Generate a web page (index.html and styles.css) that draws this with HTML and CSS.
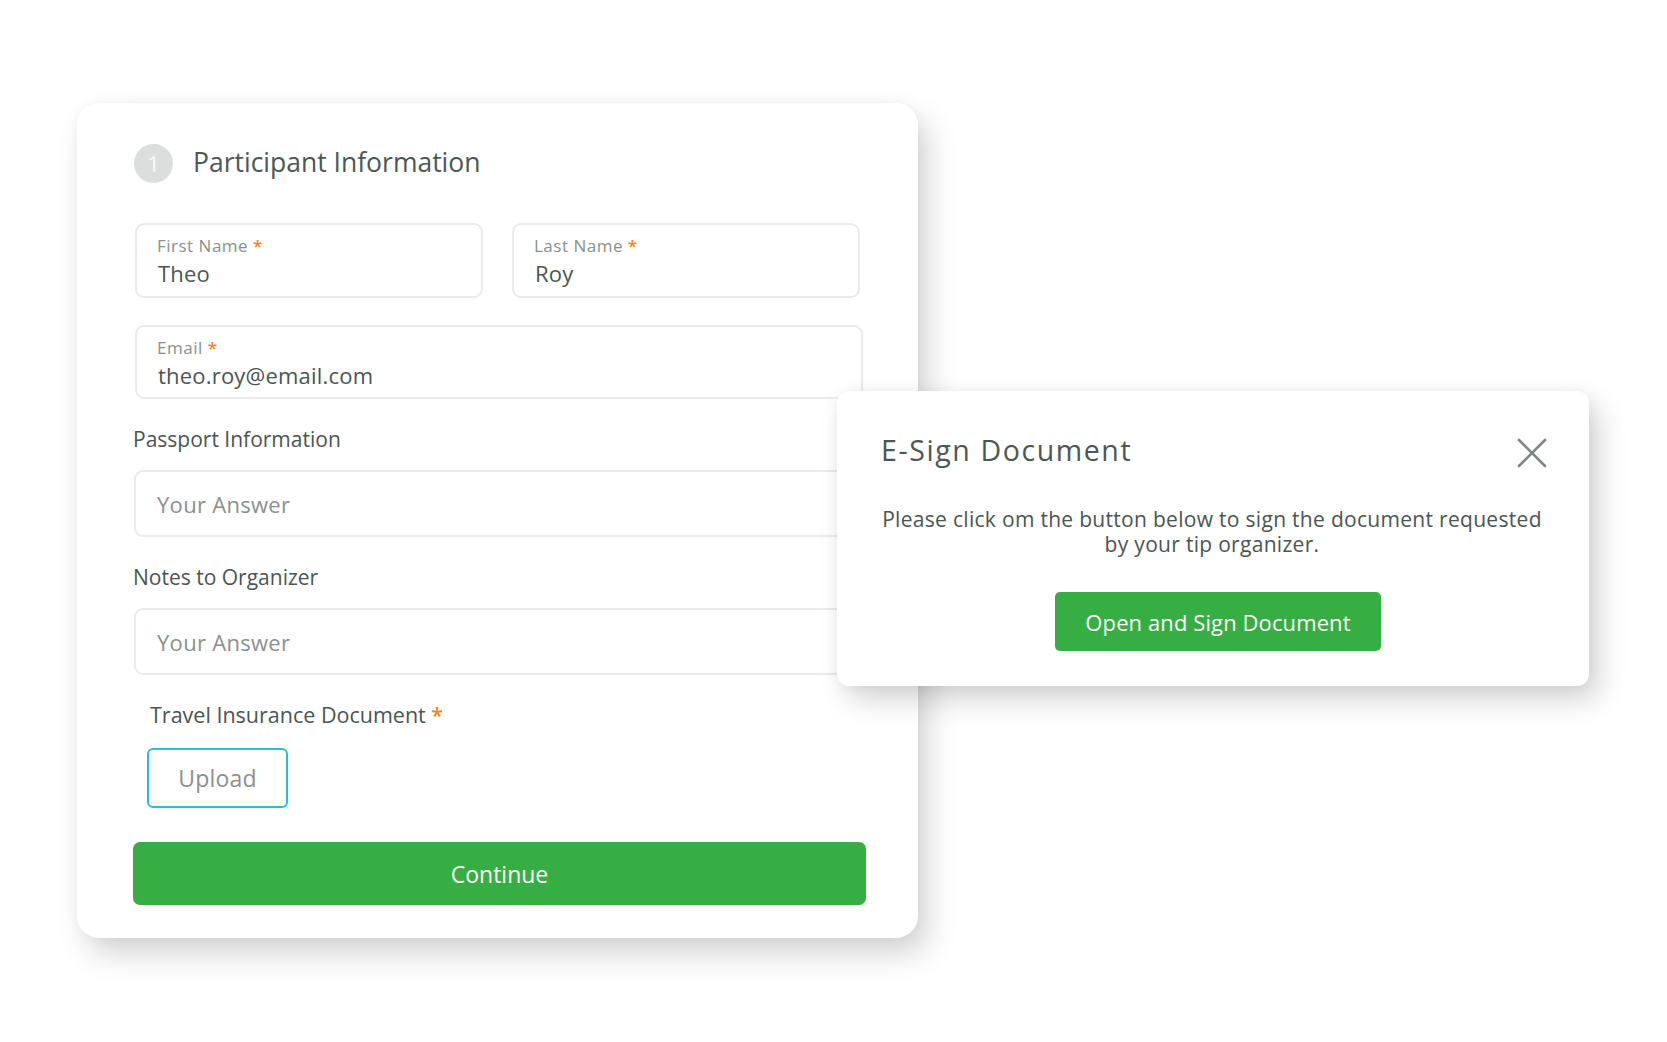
FILE: index.html
```html
<!DOCTYPE html>
<html lang="en">
<head>
<meta charset="utf-8">
<title>Participant Information</title>
<link rel="stylesheet" href="styles.css">
</head>
<body>
<div class="stage">
  <section class="card">
    <header class="card-head">
      <span class="step">1</span>
      <h1 class="card-title">Participant Information</h1>
    </header>

    <div class="name-row">
      <div class="field">
        <span class="field-label">First Name <span class="req">*</span></span>
        <span class="field-value">Theo</span>
      </div>
      <div class="field">
        <span class="field-label">Last Name <span class="req">*</span></span>
        <span class="field-value">Roy</span>
      </div>
    </div>

    <div class="field field-wide">
      <span class="field-label">Email <span class="req">*</span></span>
      <span class="field-value">theo.roy@email.com</span>
    </div>

    <div class="q-label">Passport Information</div>
    <div class="answer">Your Answer</div>

    <div class="q-label">Notes to Organizer</div>
    <div class="answer">Your Answer</div>

    <div class="q-label q-doc">Travel Insurance Document <span class="req">*</span></div>
    <button class="upload" type="button">Upload</button>

    <button class="continue" type="button">Continue</button>
  </section>

  <aside class="modal">
    <div class="modal-head">
      <h2 class="modal-title">E-Sign Document</h2>
      <svg class="close" width="30" height="30" viewBox="0 0 30 30" aria-hidden="true">
        <path d="M2 2 L28 28 M28 2 L2 28" stroke="#7d8685" stroke-width="2.6" stroke-linecap="round" fill="none"/>
      </svg>
    </div>
    <p class="modal-text"><span class="line">Please click om the button below to sign the document requested</span><span class="line">by your tip organizer.</span></p>
    <div class="modal-actions">
      <button class="sign" type="button">Open and Sign Document</button>
    </div>
  </aside>
</div>
</body>
</html>
```

FILE: styles.css
```css
* { box-sizing: border-box; }

html, body {
  margin: 0;
  padding: 0;
  background: #ffffff;
}

body {
  font-family: "Open Sans", "Noto Sans", sans-serif;
  color: #4b5554;
}

.stage {
  position: relative;
  width: 1667px;
  height: 1042px;
  padding: 103px 0 0 77px;
}

/* ---------- main card ---------- */
.card {
  width: 841px;
  height: 835px;
  background: #fff;
  border-radius: 22px;
  padding: 40px 53px 33px 56px;
  box-shadow: 10px 16px 30px rgba(0, 0, 0, 0.17), 0 0 14px rgba(0, 0, 0, 0.04);
  display: flex;
  flex-direction: column;
  align-items: flex-start;
}

.card-head {
  display: flex;
  align-items: center;
  gap: 20px;
  height: 40px;
  margin-left: 1px;
}

.step {
  width: 39px;
  height: 39px;
  border-radius: 50%;
  background: #dcdddd;
  color: #fafafa;
  font-size: 22px;
  font-weight: 400;
  display: flex;
  align-items: center;
  justify-content: center;
}

.card-title {
  margin: -2px 0 0;
  font-size: 26.5px;
  font-weight: 400;
  color: #4d5756;
}

.name-row {
  display: grid;
  grid-template-columns: 348px 348px;
  column-gap: 29px;
  margin: 40px 0 0 2px;
}

.field {
  height: 75px;
  border: 2px solid #ebebeb;
  border-radius: 9px;
  padding: 10px 20px 0;
  display: flex;
  flex-direction: column;
}

.field-wide {
  width: 728px;
  height: 74px;
  margin: 27px 0 0 2px;
}

.field-label {
  font-size: 17px;
  line-height: 22px;
  letter-spacing: 0.5px;
  color: #8b908f;
}

.field-value {
  font-size: 22px;
  line-height: 28px;
  letter-spacing: 0.2px;
  color: #4b5554;
  margin: 2px 0 0 1px;
}

.req {
  color: #f5841f;
  font-weight: 600;
}

.q-label {
  font-size: 21px;
  line-height: 28px;
  color: #4b5554;
  margin-top: 26px;
}

.answer {
  width: 731px;
  height: 67px;
  margin: 17px 0 0 1px;
  border: 2px solid #ebebeb;
  border-radius: 9px;
  padding: 0 21px;
  display: flex;
  align-items: center;
  font-size: 22px;
  letter-spacing: 0.3px;
  color: #8b908f;
}

.q-doc {
  margin: 25px 0 0 17px;
  font-size: 21.5px;
  line-height: 30px;
}

.upload {
  margin: 18px 0 0 14px;
  width: 141px;
  height: 60px;
  border: 2px solid #2bbcd6;
  border-radius: 6px;
  background: #fff;
  font-family: inherit;
  font-size: 23px;
  letter-spacing: 0.2px;
  color: #8b908f;
  padding: 0;
}

.continue {
  margin-top: 34px;
  width: 733px;
  height: 63px;
  border: none;
  border-radius: 7px;
  background: #37ae44;
  color: #fff;
  font-family: inherit;
  font-size: 23px;
  padding: 0;
}

/* ---------- e-sign modal (overlay) ---------- */
.modal {
  position: absolute;
  left: 837px;
  top: 391px;
  width: 752px;
  height: 295px;
  background: #fff;
  border-radius: 12px;
  padding: 41px 42px 0 44px;
  box-shadow: 10px 14px 28px rgba(0, 0, 0, 0.17), 0 0 14px rgba(0, 0, 0, 0.05);
}

.modal-head {
  display: flex;
  justify-content: space-between;
  align-items: flex-start;
  height: 36px;
}

.modal-title {
  margin: 0;
  font-size: 28.5px;
  line-height: 36px;
  letter-spacing: 1.6px;
  font-weight: 500;
  color: #4d5756;
}

.close {
  margin-top: 6px;
}

.modal-text {
  margin: 39px 0 0 -4px;
  display: flex;
  flex-direction: column;
  align-items: center;
  font-size: 21px;
  line-height: 25px;
  letter-spacing: 0.3px;
  color: #4b5554;
  white-space: nowrap;
}

.modal-text .line {
  display: block;
}

.modal-actions {
  display: flex;
  justify-content: center;
  margin-top: 35px;
}

.sign {
  width: 326px;
  height: 59px;
  border: none;
  border-radius: 5px;
  background: #37ae44;
  color: #fff;
  font-family: inherit;
  font-size: 22px;
  letter-spacing: 0.1px;
  padding: 0;
  margin-left: 8px;
}
```
